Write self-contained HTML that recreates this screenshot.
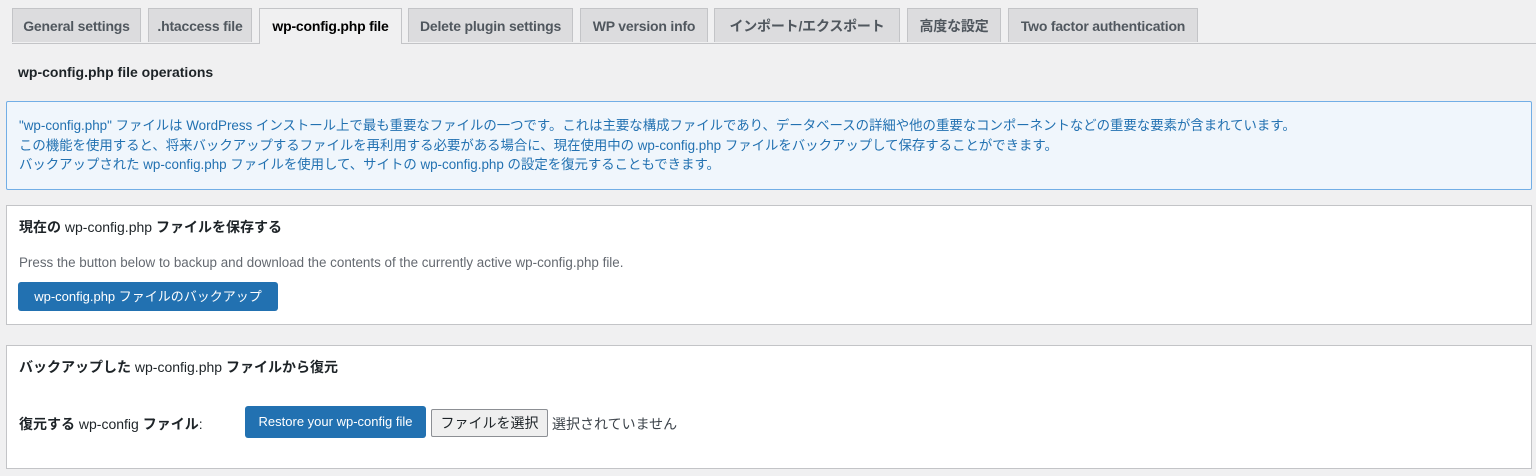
<!DOCTYPE html>
<html><head><meta charset="utf-8"><style>
body{margin:0;width:1536px;height:476px;background:#f0f0f1;font-family:"Liberation Sans","Noto Sans CJK JP",sans-serif;color:#1d2327;position:relative;overflow:hidden;font-size:13px}
.tab{position:absolute;top:8px;height:34px;line-height:34px;background:#dcdcde;border:1px solid #c3c4c7;border-bottom:none;font-size:14px;font-weight:bold;color:#50575e;text-align:center;box-sizing:border-box;letter-spacing:-0.2px}
.tab.a{background:#f0f0f1;color:#000;height:36px}
.line{position:absolute;left:12px;right:0;top:43px;border-top:1px solid #c3c4c7}
.abs{position:absolute;white-space:nowrap}
.box{position:absolute;left:6px;width:1526px;background:#fff;border:1px solid #c3c4c7;box-sizing:border-box}
.btn{position:absolute;background:#2271b1;color:#fff;border-radius:3px;font-size:13px;text-align:center;box-sizing:border-box}
</style></head><body>
<div class="line"></div>
<div class="tab" style="left:12px;width:129px">General settings</div>
<div class="tab" style="left:148px;width:104px">.htaccess file</div>
<div class="tab a" style="left:259px;width:143px">wp-config.php file</div>
<div class="tab" style="left:408px;width:165px">Delete plugin settings</div>
<div class="tab" style="left:580px;width:128px">WP version info</div>
<div class="tab" style="left:714px;width:186px">インポート/エクスポート</div>
<div class="tab" style="left:907px;width:94px">高度な設定</div>
<div class="tab" style="left:1008px;width:190px">Two factor authentication</div>
<div class="abs" style="left:18px;top:64px;font-size:14px;font-weight:bold">wp-config.php file operations</div>
<div class="box" style="top:101px;height:89px;background:#f0f6fc;border-color:#72aee6;border-radius:2px"></div>
<div class="abs" style="left:19px;top:116px;color:#2271b1;line-height:19.5px;font-size:13.4px">"wp-config.php" ファイルは WordPress インストール上で最も重要なファイルの一つです。これは主要な構成ファイルであり、データベースの詳細や他の重要なコンポーネントなどの重要な要素が含まれています。<br>この機能を使用すると、将来バックアップするファイルを再利用する必要がある場合に、現在使用中の wp-config.php ファイルをバックアップして保存することができます。<br>バックアップされた wp-config.php ファイルを使用して、サイトの wp-config.php の設定を復元することもできます。</div>
<div class="box" style="top:205px;height:120px"></div>
<div class="abs" style="left:19px;top:217px;font-size:14px;font-weight:bold">現在の <span style="font-weight:normal">wp-config.php</span> ファイルを保存する</div>
<div class="abs" style="left:19px;top:255px;color:#646970;font-size:13.4px">Press the button below to backup and download the contents of the currently active wp-config.php file.</div>
<div class="btn" style="left:18px;top:282px;width:260px;height:29px;line-height:29px">wp-config.php ファイルのバックアップ</div>
<div class="box" style="top:345px;height:124px"></div>
<div class="abs" style="left:19px;top:357px;font-size:14px;font-weight:bold">バックアップした <span style="font-weight:normal">wp-config.php</span> ファイルから復元</div>
<div class="abs" style="left:19px;top:414px;font-size:14px;font-weight:bold">復元する <span style="font-weight:normal">wp-config</span> ファイル<span style="font-weight:normal">:</span></div>
<div class="btn" style="left:245px;top:406px;width:181px;height:32px;line-height:32px">Restore your wp-config file</div>
<div class="abs" style="left:431px;top:409px;width:117px;height:28px;line-height:26px;border:1px solid #8c8f94;background:#efefef;border-radius:2px;box-sizing:border-box;text-align:center;font-size:14px">ファイルを選択</div>
<div class="abs" style="left:552px;top:414px;font-size:14px;color:#3c434a">選択されていません</div>
</body></html>
